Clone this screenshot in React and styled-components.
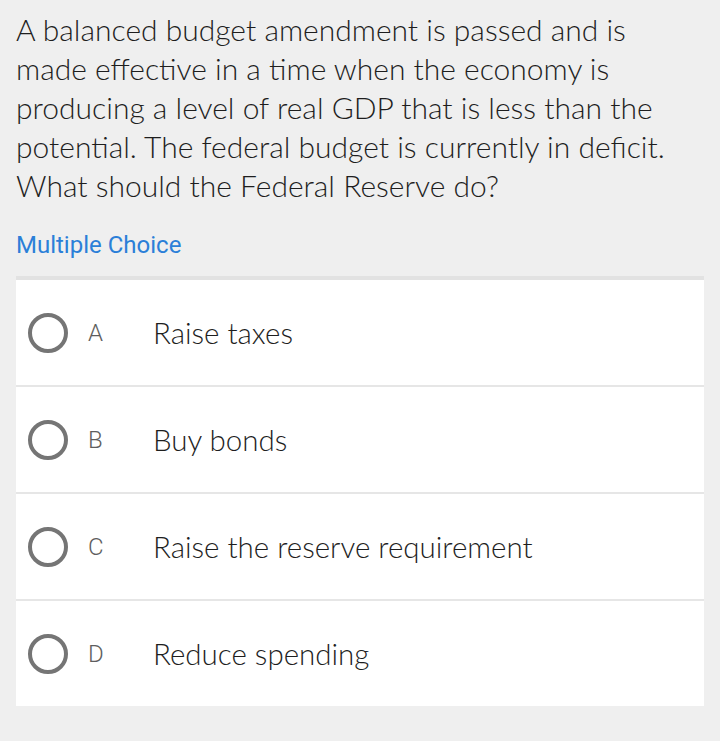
import React from 'react';
import styled, { createGlobalStyle } from 'styled-components';

const GlobalStyle = createGlobalStyle`
  html, body {
    margin: 0;
    padding: 0;
    background: #efefef;
  }
`;

const options = [
  { letter: 'A', text: 'Raise taxes' },
  { letter: 'B', text: 'Buy bonds' },
  { letter: 'C', text: 'Raise the reserve requirement' },
  { letter: 'D', text: 'Reduce spending' },
];

export default function App() {
  return (
    <>
      <GlobalStyle />
      <Page>
        <Question>
          A balanced budget amendment is passed and is made effective in a time when the economy is
          producing a level of real GDP that is less than the potential. The federal budget is
          currently in deficit. What should the Federal Reserve do?
        </Question>
        <TypeLabel>Multiple Choice</TypeLabel>
        <Card>
          {options.map(opt => (
            <OptionRow key={opt.letter}>
              <Radio />
              <Letter>{opt.letter}</Letter>
              <OptionText>{opt.text}</OptionText>
            </OptionRow>
          ))}
        </Card>
      </Page>
    </>
  );
}

const Page = styled.main`
  width: 720px;
  min-height: 741px;
  box-sizing: border-box;
  padding: 10px 16px 0 16px;
  background: #efefef;
`;

const Question = styled.p`
  margin: 0;
  font-family: Lato, "Liberation Sans", sans-serif;
  font-weight: 300;
  font-size: 30px;
  line-height: 39px;
  color: #1e1e1e;
`;

const TypeLabel = styled.div`
  margin-top: 25px;
  font-family: Roboto, "Liberation Sans", sans-serif;
  font-size: 24px;
  line-height: 30px;
  color: #2b7fd8;
`;

const Card = styled.section`
  margin-top: 16px;
  background: #ffffff;
  border-top: 4px solid #e2e2e2;
`;

const OptionRow = styled.div`
  height: 105px;
  display: flex;
  align-items: center;
  padding-left: 12px;
  & + & {
    border-top: 2px solid #e6e6e6;
  }
`;

const Radio = styled.span`
  width: 32px;
  height: 32px;
  border: 4px solid #757575;
  border-radius: 50%;
  flex-shrink: 0;
`;

const Letter = styled.span`
  width: 65px;
  padding-left: 20px;
  font-family: Roboto, "Liberation Sans", sans-serif;
  font-weight: 300;
  font-size: 24px;
  color: #5e5e5e;
`;

const OptionText = styled.span`
  font-family: Lato, "Liberation Sans", sans-serif;
  font-weight: 300;
  font-size: 29.5px;
  color: #1e1e1e;
`;
